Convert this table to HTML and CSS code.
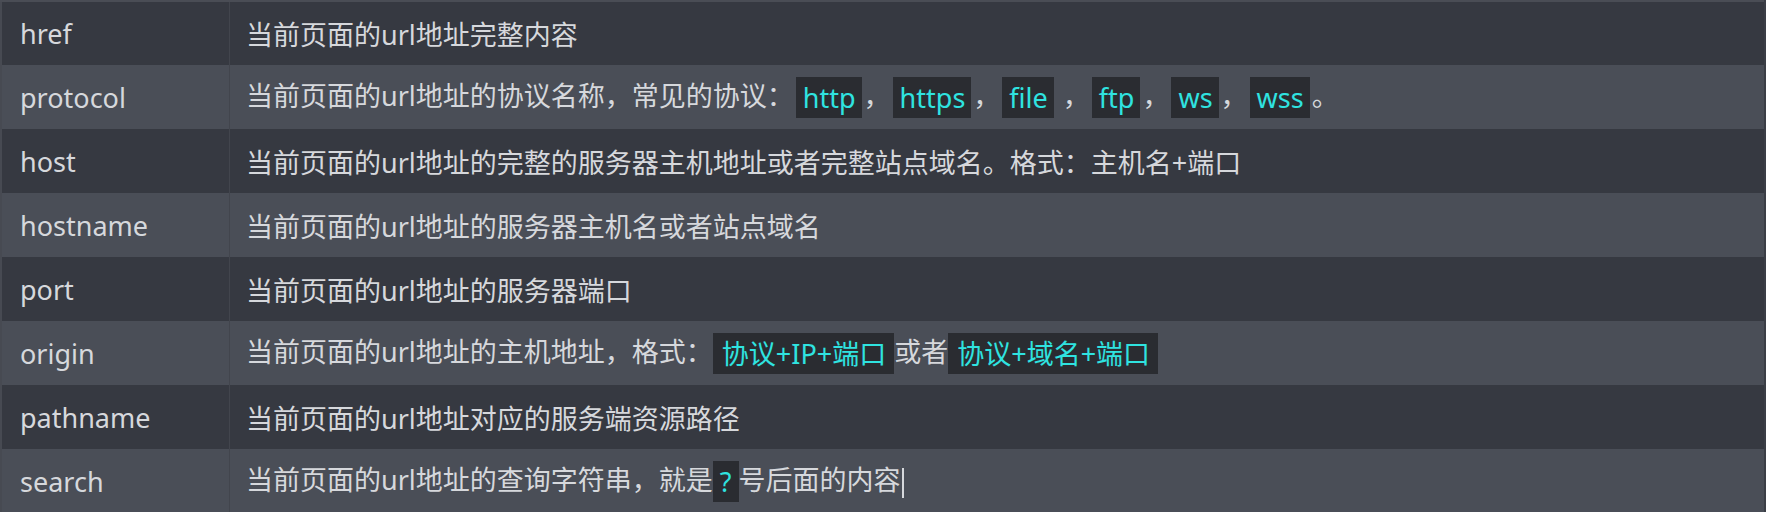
FILE: index.html
```html
<!DOCTYPE html>
<html lang="zh-CN">
<head>
<meta charset="utf-8">
<title>location 属性</title>
<link rel="stylesheet" href="styles.css">
</head>
<body>
<table class="props">
  <tbody>
    <tr class="dark"><td class="name">href</td><td class="desc">当前页面的url地址完整内容</td></tr>
    <tr class="light"><td class="name">protocol</td><td class="desc">当前页面的url地址的协议名称，常见的协议：<code class="chip chip-sep">http</code>，<code class="chip chip-sep">https</code>，<code class="chip chip-sep">file</code> ，<code class="chip chip-sep">ftp</code>，<code class="chip chip-sep">ws</code>，<code class="chip chip-sep">wss</code>。</td></tr>
    <tr class="dark"><td class="name">host</td><td class="desc">当前页面的url地址的完整的服务器主机地址或者完整站点域名。格式：主机名+端口</td></tr>
    <tr class="light"><td class="name">hostname</td><td class="desc">当前页面的url地址的服务器主机名或者站点域名</td></tr>
    <tr class="dark"><td class="name">port</td><td class="desc">当前页面的url地址的服务器端口</td></tr>
    <tr class="light"><td class="name">origin</td><td class="desc">当前页面的url地址的主机地址，格式：<code class="chip">协议+IP+端口</code>或者<code class="chip">协议+域名+端口</code></td></tr>
    <tr class="dark"><td class="name">pathname</td><td class="desc">当前页面的url地址对应的服务端资源路径</td></tr>
    <tr class="light"><td class="name">search</td><td class="desc">当前页面的url地址的查询字符串，就是<code class="chip chip-q">?</code>号后面的内容<span class="caret"></span></td></tr>
  </tbody>
</table>
</body>
</html>
```

FILE: styles.css
```css
html, body {
  margin: 0;
  padding: 0;
  background: #3b3e46;
}

body {
  width: 1766px;
  height: 512px;
  overflow: hidden;
  font-family: "Noto Sans", "Noto Sans CJK SC", sans-serif;
  font-size: 27px;
  color: #d6d8dc;
}

.props {
  width: 1764px;
  border-collapse: collapse;
  border-top: 2px solid #4a4d55;
  border-left: 2px solid #474a52;
}

.props tr {
  height: 64px;
}

.props td {
  padding: 0;
  vertical-align: middle;
  white-space: nowrap;
}

.dark {
  background: #363941;
}

.light {
  background: #4a4e57;
}

.name {
  width: 209px;
  padding-left: 18px !important;
  border-right: 1px solid #42454d;
}

.desc {
  padding-left: 16px !important;
}

.chip {
  display: inline-block;
  font-family: "Noto Sans", "Noto Sans CJK SC", sans-serif;
  font-size: 27px;
  line-height: 35px;
  padding: 3px 8px 3px 9px;
  background: #2a2c31;
  color: #2fe3e0;
  vertical-align: middle;
  position: relative;
  top: -1px;
}

.chip-sep {
  margin: 0 2px;
  padding: 3px 6px 3px 7px;
}

.chip-q {
  padding: 3px 7px;
}

.caret {
  display: inline-block;
  width: 2px;
  height: 30px;
  background: #d6d8dc;
  vertical-align: middle;
  margin-left: 1px;
}
```
